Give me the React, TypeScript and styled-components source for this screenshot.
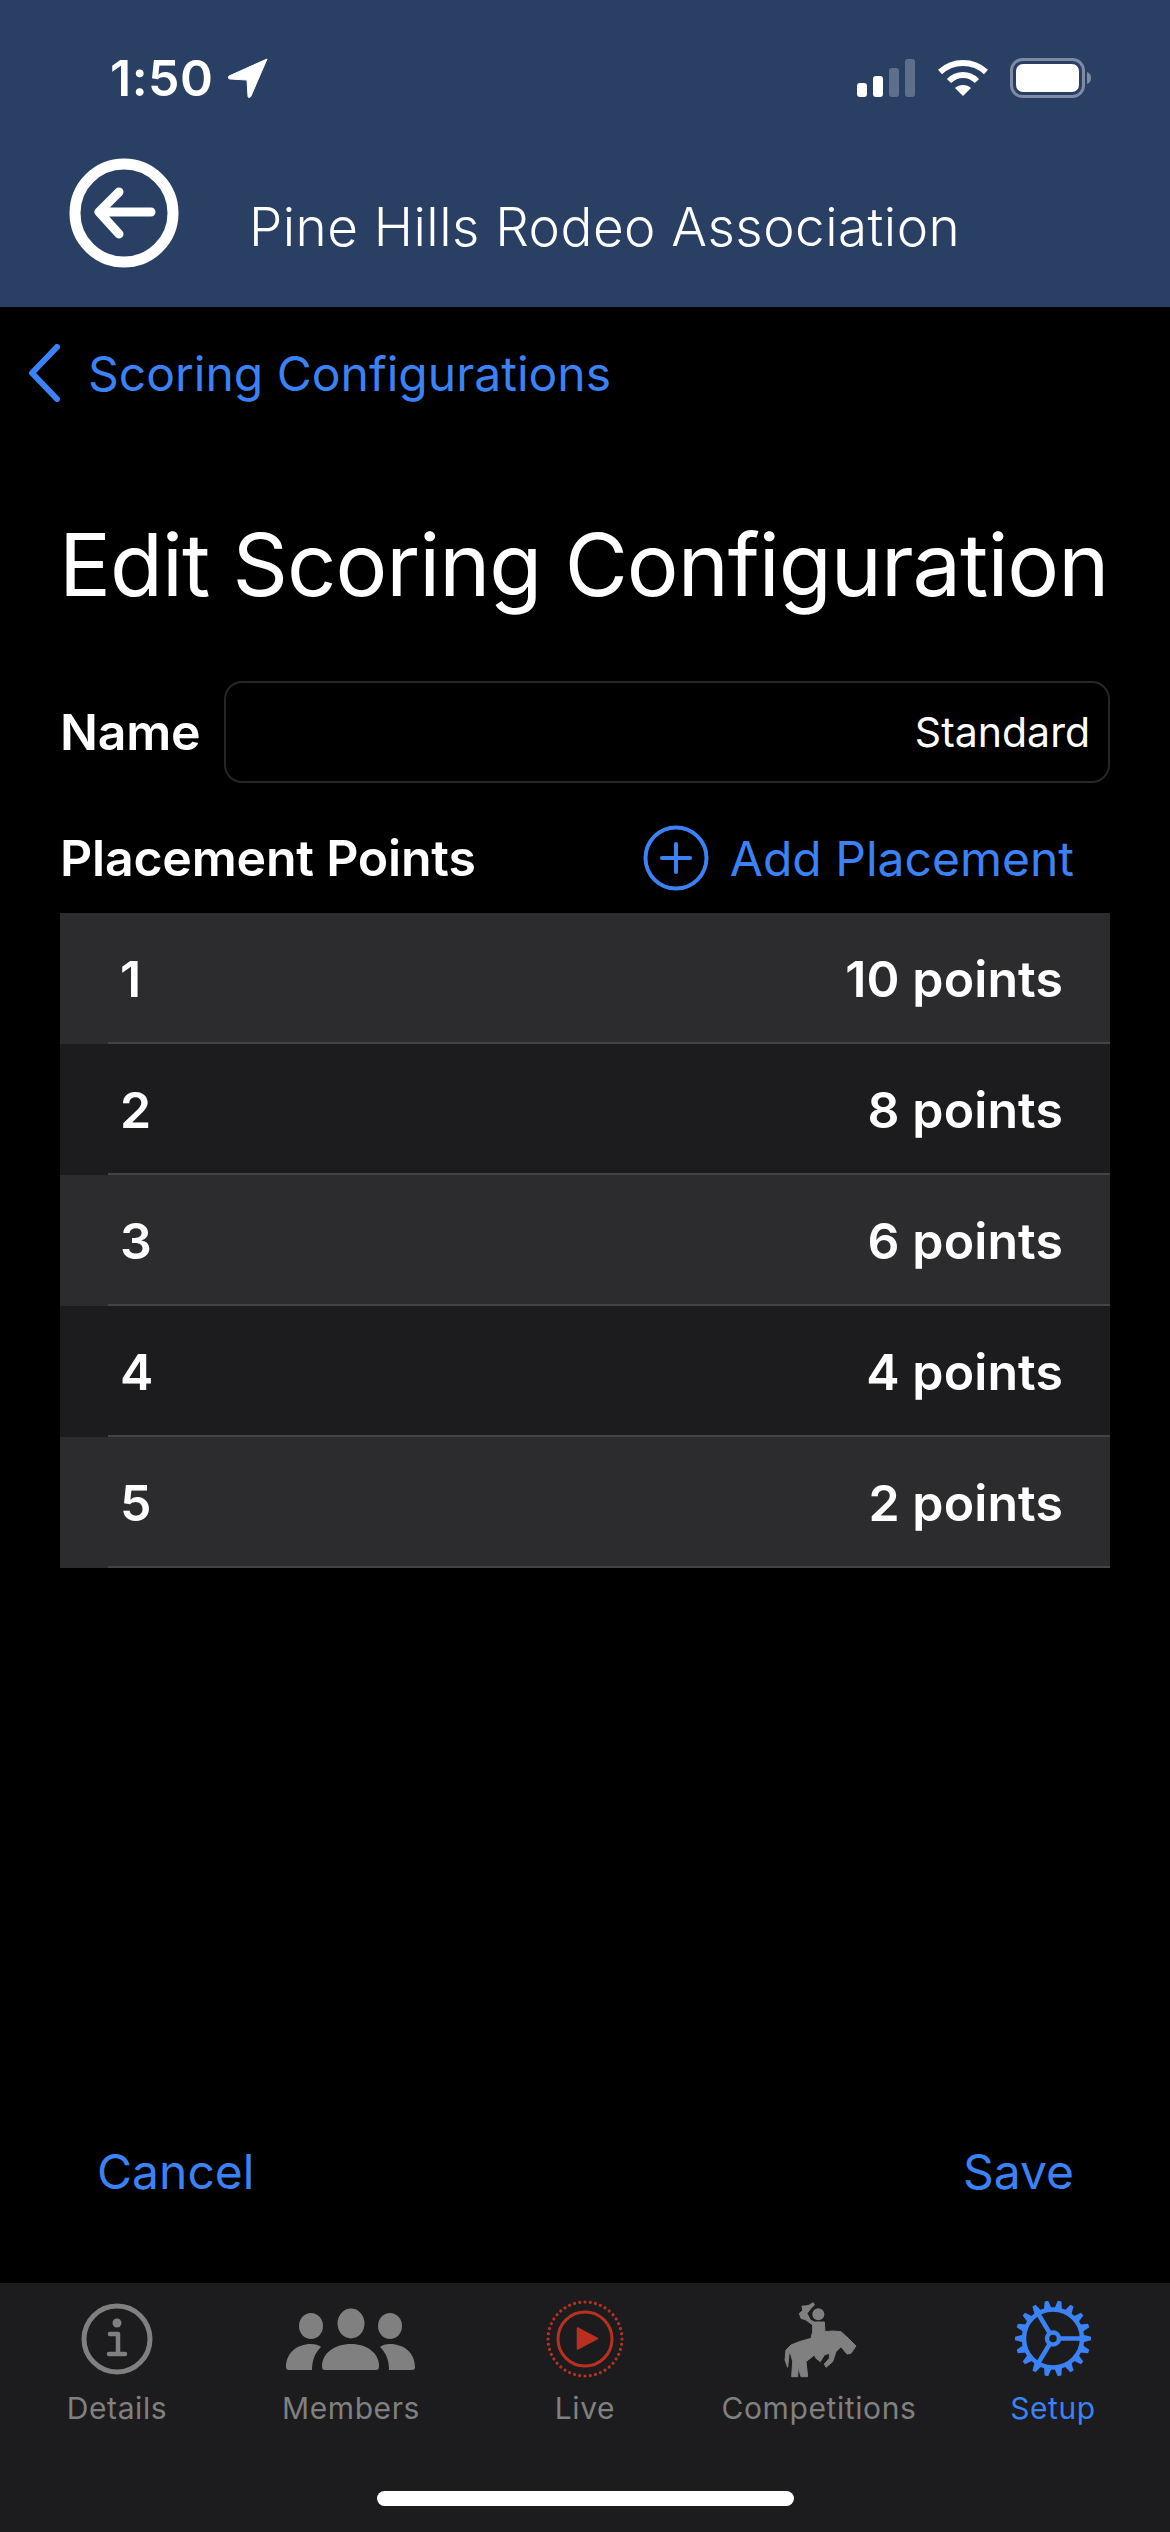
import * as React from "react";
import styled, { createGlobalStyle } from "styled-components";

const BLUE = "#3b82f6";
const GRAY = "#808080";
const RED = "#b93021";

const Global = createGlobalStyle`
  html, body { margin: 0; padding: 0; background: #000; }
  body { font-family: Inter, "Liberation Sans", sans-serif; }
`;

const Page = styled.div`
  width: 1170px;
  height: 2532px;
  display: flex;
  flex-direction: column;
  background: #000;
  overflow: hidden;
`;

const Header = styled.header`
  height: 307px;
  flex: none;
  box-sizing: border-box;
  background: #293f64;
  padding: 56px 79px 0 69px;
  display: flex;
  flex-direction: column;
`;

const StatusBar = styled.div`
  height: 44px;
  display: flex;
  align-items: center;
  justify-content: space-between;
  padding-left: 41px;
`;

const Cluster = styled.div<{ $gap: number }>`
  display: flex;
  align-items: center;
  gap: ${(p) => p.$gap}px;
`;

const Clock = styled.span`
  color: #fff;
  font-size: 50px;
  font-weight: 600;
  letter-spacing: 0.5px;
  line-height: 44px;
`;

const NavRow = styled.div`
  margin-top: 57px;
  display: flex;
  align-items: center;
  gap: 70px;
`;

const OrgName = styled.h2`
  margin: 28px 0 0;
  color: #fff;
  font-size: 53px;
  font-weight: 300;
  letter-spacing: 0.47px;
  white-space: nowrap;
`;

const BackLink = styled.div`
  height: 132px;
  flex: none;
  display: flex;
  align-items: center;
  gap: 27px;
  padding: 0 0 0 28px;
  color: ${BLUE};
  font-size: 48px;
  font-weight: 400;
`;

const Content = styled.main`
  flex: 1;
  display: flex;
  flex-direction: column;
  padding: 0 60px;
`;

const Title = styled.h1`
  margin: 74px 0 0 -1px;
  color: #fff;
  font-size: 86.5px;
  line-height: 104px;
  font-weight: 400;
  letter-spacing: -1px;
  white-space: nowrap;
`;

const NameRow = styled.div`
  margin-top: 64px;
  display: flex;
  align-items: center;
  gap: 24px;
`;

const FieldLabel = styled.span`
  color: #fff;
  font-size: 50px;
  font-weight: 600;
  letter-spacing: -0.2px;
`;

const NameInput = styled.div`
  flex: 1;
  height: 102px;
  box-sizing: border-box;
  border: 2px solid #262628;
  border-radius: 18px;
  display: flex;
  align-items: center;
  justify-content: flex-end;
  padding-right: 18px;
  color: #fff;
  font-size: 41px;
  font-weight: 400;
`;

const SectionRow = styled.div`
  margin-top: 20px;
  height: 110px;
  display: flex;
  align-items: center;
  justify-content: space-between;
  padding-right: 36px;
`;

const AddButton = styled.div`
  display: flex;
  align-items: center;
  gap: 21px;
  color: ${BLUE};
  font-size: 48px;
`;

const List = styled.div`
  display: flex;
  flex-direction: column;
`;

const Row = styled.div<{ $shade: boolean }>`
  height: 131px;
  box-sizing: border-box;
  position: relative;
  background: ${(p) => (p.$shade ? "#2c2c2e" : "#1c1c1e")};
  display: flex;
  align-items: center;
  justify-content: space-between;
  padding: 0 47px 0 60px;
  color: #fff;
  font-size: 50px;
  font-weight: 600;
  letter-spacing: 0.1px;

  &::after {
    content: "";
    position: absolute;
    left: 48px;
    right: 0;
    bottom: 0;
    height: 2px;
    background: #444446;
  }
`;

const Actions = styled.div`
  margin-top: auto;
  height: 141px;
  display: flex;
  align-items: flex-start;
  justify-content: space-between;
  padding: 0 36px 0 37px;
  color: ${BLUE};
  font-size: 48px;
  line-height: 60px;
`;

const TabBar = styled.nav`
  flex: none;
  height: 249px;
  box-sizing: border-box;
  background: #1c1c1e;
  display: flex;
  flex-direction: column;
`;

const Tabs = styled.div`
  display: grid;
  grid-template-columns: repeat(5, 234px);
`;

const Tab = styled.div<{ $active?: boolean }>`
  display: flex;
  flex-direction: column;
  align-items: center;
  color: ${(p) => (p.$active ? BLUE : GRAY)};
  font-size: 30px;
  font-weight: 400;
  letter-spacing: 0.6px;
  line-height: 36px;
`;

const TabIcon = styled.svg<{ $wide?: boolean }>`
  display: block;
  width: ${(p) => (p.$wide ? 140 : 110)}px;
  height: 100px;
  margin: 6px 0 1px;
`;

const HomeBar = styled.div`
  width: 417px;
  height: 15px;
  margin: 65px auto 0;
  border-radius: 8px;
  background: #fff;
`;

const Signal = () => (
  <svg width="59" height="38" viewBox="0 0 59 38">
    <rect x="0" y="24" width="10" height="14" rx="3" fill="#fff" />
    <rect x="16" y="17" width="10" height="21" rx="3" fill="#fff" />
    <rect x="32" y="9" width="10" height="29" rx="3" fill="#fff" fillOpacity=".25" />
    <rect x="48" y="0" width="10" height="38" rx="3" fill="#fff" fillOpacity=".25" />
  </svg>
);

const Wifi = () => (
  <svg width="50" height="38" viewBox="0 0 50 38" fill="none" stroke="#fff" strokeWidth="6">
    <path d="M2 13 C15 1 35 1 48 13" />
    <path d="M11 22 C19 14 31 14 39 22" />
    <path d="M25 37 L17 29 C21 25 29 25 33 29 Z" fill="#fff" stroke="none" />
  </svg>
);

const Battery = () => (
  <svg width="81" height="40" viewBox="0 0 81 40">
    <rect x="1.5" y="1.5" width="72" height="37" rx="11" fill="none" stroke="#fff" strokeOpacity=".4" strokeWidth="3" />
    <rect x="6" y="6" width="63" height="28" rx="7" fill="#fff" />
    <path d="M77 14 C80 15 81 17 81 20 C81 23 80 25 77 26 Z" fill="#fff" fillOpacity=".4" />
  </svg>
);

const teeth = Array.from({ length: 18 }, (_, i) => i * 20);
const dots = Array.from({ length: 44 }, (_, i) => (i * 360) / 44);

export default function App() {
  const rows = ["10 points", "8 points", "6 points", "4 points", "2 points"];
  return (
    <Page>
      <Global />
      <Header>
        <StatusBar>
          <Cluster $gap={14}>
            <Clock>1:50</Clock>
            <svg width="40" height="40" viewBox="0 0 40 40">
              <path d="M39 1 L1 18 C0 19 0 21 2 21 L19 22 L20 38 C20 40 22 40 23 38 Z" fill="#fff" stroke="#fff" strokeWidth="1" strokeLinejoin="round" />
            </svg>
          </Cluster>
          <Cluster $gap={22}>
            <Signal />
            <Wifi />
            <Battery />
          </Cluster>
        </StatusBar>
        <NavRow>
          <svg width="110" height="112" viewBox="0 0 110 112" fill="none" stroke="#fff">
            <circle cx="55" cy="56" r="49" strokeWidth="11" />
            <path d="M50 35 L30 55 L50 77 M32 55 L82 55" strokeWidth="9" strokeLinecap="round" strokeLinejoin="round" />
          </svg>
          <OrgName>Pine Hills Rodeo Association</OrgName>
        </NavRow>
      </Header>
      <BackLink>
        <svg width="33" height="58" viewBox="0 0 33 58" fill="none" stroke={BLUE} strokeWidth="6" strokeLinecap="round" strokeLinejoin="round">
          <path d="M29 3 L4 29 L29 55" />
        </svg>
        Scoring Configurations
      </BackLink>
      <Content>
        <Title>Edit Scoring Configuration</Title>
        <NameRow>
          <FieldLabel>Name</FieldLabel>
          <NameInput>Standard</NameInput>
        </NameRow>
        <SectionRow>
          <FieldLabel>Placement Points</FieldLabel>
          <AddButton>
            <svg width="66" height="66" viewBox="0 0 66 66" fill="none" stroke={BLUE} strokeLinecap="round">
              <circle cx="33" cy="33" r="30.5" strokeWidth="4" />
              <path d="M33 19 V47 M19 33 H47" strokeWidth="4" />
            </svg>
            Add Placement
          </AddButton>
        </SectionRow>
        <List>
          {rows.map((points, i) => (
            <Row key={points} $shade={i % 2 === 0}>
              <span>{i + 1}</span>
              <span>{points}</span>
            </Row>
          ))}
        </List>
        <Actions>
          <span>Cancel</span>
          <span>Save</span>
        </Actions>
      </Content>
      <TabBar>
        <Tabs>
          <Tab>
            <TabIcon viewBox="0 0 110 100">
              <circle cx="55" cy="50" r="33" fill="none" stroke={GRAY} strokeWidth="5" />
              <circle cx="55" cy="34" r="4.5" fill={GRAY} />
              <path d="M48 45 H56 V64 M47 65 H63" fill="none" stroke={GRAY} strokeWidth="4.5" strokeLinecap="round" strokeLinejoin="round" />
            </TabIcon>
            Details
          </Tab>
          <Tab>
            <TabIcon $wide viewBox="0 0 140 100">
              <ellipse cx="30" cy="37" rx="12" ry="13" fill={GRAY} />
              <ellipse cx="109" cy="37" rx="12" ry="13" fill={GRAY} />
              <ellipse cx="70" cy="34.5" rx="13.5" ry="15" fill={GRAY} />
              <path d="M5 78 C5 64 16 55 30 55 C34 55 38 56 40 58 C34 64 31 71 31 81 H8 C6 81 5 80 5 78 Z" fill={GRAY} />
              <path d="M134 78 C134 64 123 55 109 55 C105 55 101 56 99 58 C105 64 108 71 108 81 H131 C133 81 134 80 134 78 Z" fill={GRAY} />
              <path d="M41 77 C41 64 54 55 70 55 C86 55 98 64 98 77 C98 80 97 81 95 81 H44 C42 81 41 80 41 77 Z" fill={GRAY} />
            </TabIcon>
            Members
          </Tab>
          <Tab>
            <TabIcon viewBox="0 0 110 100">
              {dots.map((a) => (
                <circle key={a} cx="55" cy="13" r="1.6" fill={RED} transform={`rotate(${a} 55 50)`} />
              ))}
              <circle cx="55" cy="50" r="27" fill="none" stroke={RED} strokeWidth="3" />
              <path d="M47.5 39 L67.5 49.5 L47.5 60 Z" fill={RED} stroke={RED} strokeWidth="1.5" strokeLinejoin="round" />
            </TabIcon>
            Live
          </Tab>
          <Tab>
            <TabIcon viewBox="9 -3 330 300">
              <circle cx="172" cy="73" r="18" fill={GRAY} />
              <path
                d="M115 70 L125 62 L123 48 L135 48 L145 45 L157 38 L160 45 L150 55 L138 70 L148 90 L160 96 L190 96 L192 125 L215 123 L240 125 L262 145 L285 168 L270 190 L258 192 L240 170 L225 185 L215 215 L195 232 L190 222 L205 205 L205 190 L190 195 L178 215 L165 205 L160 195 L135 215 L140 260 L120 260 L112 232 L110 260 L92 260 L95 215 L90 195 L85 185 L80 232 L72 210 L75 180 L90 165 L115 155 L150 145 L155 125 L155 105 L135 90 L120 85 Z"
                fill={GRAY}
                stroke={GRAY}
                strokeWidth="3"
                strokeLinejoin="round"
              />
            </TabIcon>
            Competitions
          </Tab>
          <Tab $active>
            <TabIcon viewBox="0 0 110 100">
              <g fill="none" stroke={BLUE} strokeWidth="4.5">
                <circle cx="55" cy="49.5" r="29" />
                <circle cx="55" cy="49.5" r="6" />
                <path d="M61 49.5 H84 M52 44.5 L40 24.5 M52 54.5 L40 74.5" />
              </g>
              {teeth.map((a) => (
                <path key={a} d="M50.5 22 L53.2 11.5 H56.8 L59.5 22 Z" fill={BLUE} transform={`rotate(${a + 10} 55 49.5)`} />
              ))}
            </TabIcon>
            Setup
          </Tab>
        </Tabs>
        <HomeBar />
      </TabBar>
    </Page>
  );
}
